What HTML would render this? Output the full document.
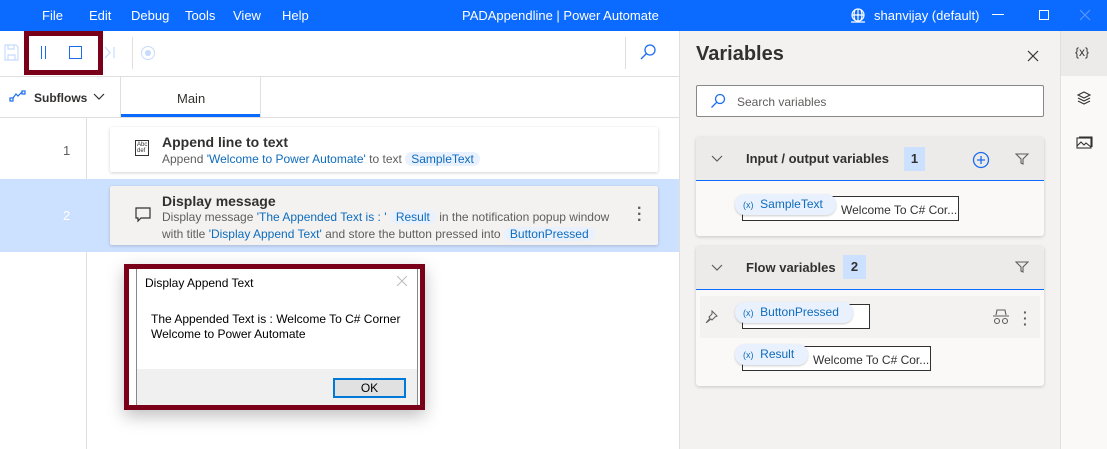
<!DOCTYPE html>
<html><head><meta charset="utf-8"><style>
*{box-sizing:border-box;margin:0;padding:0}
body{width:1107px;height:449px;overflow:hidden;position:relative;background:#fff;font-family:"Liberation Sans",sans-serif;color:#323130;font-size:13px}
.a{position:absolute}
.blue{color:#0f6cbd}
.chip{background:#e8f1fd;color:#0f6cbd;border-radius:10px;padding:0 6px}
.t{white-space:nowrap}
</style></head><body>
<!-- title bar -->
<div class="a" style="left:0;top:0;width:1107px;height:31px;background:#0b6aff;color:#fff;font-size:13px">
<span class="a t" style="left:42px;top:8px">File</span>
<span class="a t" style="left:89px;top:8px">Edit</span>
<span class="a t" style="left:131px;top:8px">Debug</span>
<span class="a t" style="left:185px;top:8px">Tools</span>
<span class="a t" style="left:233px;top:8px">View</span>
<span class="a t" style="left:282px;top:8px">Help</span>
<span class="a t" style="left:462px;top:8px">PADAppendline | Power Automate</span>
<svg class="a" style="left:850px;top:8px" width="16" height="16" viewBox="0 0 16 16" fill="none" stroke="#fff" stroke-width="1.2"><circle cx="8" cy="7" r="6"/><path d="M2 7h12M8 1v12M5 2q-2 5 0 10M11 2q2 5 0 10M1 14h14"/></svg>
<span class="a t" style="left:874px;top:8px">shanvijay (default)</span>
<div class="a" style="left:992px;top:14px;width:12px;height:1px;background:#fff"></div>
<div class="a" style="left:1039px;top:10px;width:10px;height:10px;border:1.3px solid #fff"></div>
<svg class="a" style="left:1079px;top:9px" width="12" height="12" viewBox="0 0 12 12" stroke="#5a96ff" stroke-width="1.2"><path d="M1 1l10 10M11 1L1 11"/></svg>
</div>
<!-- toolbar -->
<div class="a" style="left:0;top:76px;width:679px;height:1px;background:#e1dfdd"></div>
<svg class="a" style="left:4px;top:44px" width="15" height="17" viewBox="0 0 15 17" fill="none" stroke="#c7dbfd" stroke-width="1.2"><path d="M1 1h11l2 2v13H1z M4 16v-5h7v5 M4 1v4h6V1"/></svg>
<div class="a" style="left:24px;top:31px;width:79px;height:44px;border:5px solid #7a0019"></div>
<div class="a" style="left:41px;top:46px;width:1px;height:13px;background:#1a6cf0"></div>
<div class="a" style="left:45px;top:46px;width:1px;height:13px;background:#1a6cf0"></div>
<div class="a" style="left:69px;top:46px;width:13px;height:13px;border:1.3px solid #1a6cf0"></div>
<svg class="a" style="left:104px;top:46px" width="12" height="13" viewBox="0 0 12 13" fill="none" stroke="#c7dbfd" stroke-width="1.2"><path d="M1 1l5 5.5L1 12M10 1v11"/></svg>
<div class="a" style="left:132px;top:37px;width:1px;height:32px;background:#e1dfdd"></div>
<div class="a" style="left:141px;top:46px;width:14px;height:14px;border:1.3px solid #c7dbfd;border-radius:50%"></div>
<div class="a" style="left:145px;top:50px;width:6px;height:6px;background:#c7dbfd;border-radius:50%"></div>
<div class="a" style="left:625px;top:37px;width:1px;height:32px;background:#e1dfdd"></div>
<svg class="a" style="left:639px;top:43px" width="18" height="18" viewBox="0 0 18 18" fill="none" stroke="#1a6cf0" stroke-width="1.3"><circle cx="11" cy="7" r="5"/><path d="M7.5 10.5L2 16"/></svg>
<!-- tabs -->
<svg class="a" style="left:9px;top:89px" width="18" height="14" viewBox="0 0 18 14" fill="none" stroke="#1a6cf0" stroke-width="1.2"><rect x="1" y="9" width="3" height="3"/><rect x="13" y="2" width="3" height="3"/><path d="M4 9l3-4 2 2 4-4"/></svg>
<span class="a t" style="left:34px;top:91px;font-weight:bold;font-size:12px">Subflows</span>
<svg class="a" style="left:93px;top:93px" width="12" height="8" viewBox="0 0 12 8" fill="none" stroke="#323130" stroke-width="1.2"><path d="M1 1l5 5 5-5"/></svg>
<div class="a" style="left:120px;top:77px;width:1px;height:40px;background:#e1dfdd"></div>
<div class="a" style="left:260px;top:77px;width:1px;height:40px;background:#e1dfdd"></div>
<span class="a t" style="left:177px;top:91px;font-size:13px">Main</span>
<div class="a" style="left:121px;top:114px;width:139px;height:3px;background:#0b6aff"></div>
<div class="a" style="left:0;top:117px;width:679px;height:1px;background:#e1dfdd"></div>
<!-- rows -->
<div class="a" style="left:86px;top:118px;width:1px;height:331px;background:#e1dfdd"></div>
<div class="a" style="left:0;top:179px;width:679px;height:73px;background:#cce0ff"></div>
<span class="a" style="left:63px;top:143px;color:#605e5c">1</span>
<span class="a" style="left:63px;top:208px;color:#fff">2</span>
<div class="a" style="left:110px;top:127px;width:548px;height:45px;background:#fff;box-shadow:0 1px 3px rgba(0,0,0,.18);border-radius:2px"></div>
<div class="a" style="left:135px;top:140px;width:14px;height:16px;border:1px solid #323130;font-size:6px;line-height:6px;padding:1px">Abc<br>def</div>
<span class="a t" style="left:162px;top:134px;font-size:14px;font-weight:bold;color:#323130">Append line to text</span>
<span class="a t" style="left:162px;top:152px;font-size:12px;color:#605e5c">Append <span class="blue">'Welcome to Power Automate'</span> to text <span class="chip">SampleText</span></span>
<div class="a" style="left:110px;top:186px;width:548px;height:59px;background:#f3f2f1;box-shadow:0 1px 3px rgba(0,0,0,.18);border-radius:2px"></div>
<svg class="a" style="left:134px;top:207px" width="18" height="16" viewBox="0 0 18 16" fill="none" stroke="#323130" stroke-width="1.2"><path d="M2 1h14v10H7l-3 3v-3H2z"/></svg>
<span class="a t" style="left:162px;top:193px;font-size:14px;font-weight:bold">Display message</span>
<span class="a t" style="left:162px;top:210px;font-size:12px;color:#605e5c">Display message <span class="blue">'The Appended Text is :  '</span> <span class="chip">Result</span> in the notification popup window</span>
<span class="a t" style="left:162px;top:227px;font-size:12px;color:#605e5c">with title <span class="blue">'Display Append Text'</span> and store the button pressed into <span class="chip">ButtonPressed</span></span>
<span class="a" style="left:637px;top:206px;font-size:16px;font-weight:bold;line-height:6px;color:#605e5c">·<br>·<br>·</span>
<!-- dialog -->
<div class="a" style="left:124px;top:264px;width:301px;height:146px;border:5px solid #7a0019;box-shadow:0 6px 16px rgba(0,0,0,.25);background:#fff"></div>
<div class="a" style="left:129px;top:269px;width:8px;height:136px;background:#fff;border-right:1px solid #888"></div>
<div class="a" style="left:417px;top:269px;width:3px;height:136px;border-left:1px solid #888"></div>
<div class="a" style="left:137px;top:369px;width:280px;height:36px;background:#f0f0f0"></div>
<span class="a t" style="left:145px;top:276px;font-size:12px;color:#000">Display Append Text</span>
<svg class="a" style="left:397px;top:276px" width="10" height="10" viewBox="0 0 10 10" stroke="#bbb" stroke-width="1"><path d="M0 0l10 10M10 0L0 10"/></svg>
<span class="a t" style="left:151px;top:312px;font-size:12px;color:#000;line-height:15px">The Appended Text is :  Welcome To C# Corner<br>Welcome to Power Automate</span>
<div class="a" style="left:333px;top:378px;width:73px;height:20px;border:2px solid #0078d7;background:#e1e1e1;text-align:center;font-size:12px;line-height:16px;color:#000">OK</div>
<!-- right panel -->
<div class="a" style="left:679px;top:31px;width:381px;height:418px;background:#f3f2f1;border-left:1px solid #e1dfdd"></div>
<span class="a t" style="left:696px;top:43px;font-size:20px;font-weight:bold">Variables</span>
<svg class="a" style="left:1027px;top:50px" width="12" height="12" viewBox="0 0 12 12" stroke="#323130" stroke-width="1.2"><path d="M1 1l10 10M11 1L1 11"/></svg>
<div class="a" style="left:696px;top:85px;width:348px;height:32px;background:#fff;border:1px solid #8a8886;border-radius:2px"></div>
<svg class="a" style="left:710px;top:93px" width="16" height="16" viewBox="0 0 16 16" fill="none" stroke="#1a6cf0" stroke-width="1.3"><circle cx="10" cy="6" r="4.5"/><path d="M6.8 9.2L1.5 14.5"/></svg>
<span class="a t" style="left:737px;top:95px;font-size:12px;color:#605e5c">Search variables</span>
<!-- io section -->
<div class="a" style="left:696px;top:137px;width:348px;height:99px;background:#faf9f8;box-shadow:0 1px 3px rgba(0,0,0,.18);border-radius:3px"></div>
<div class="a" style="left:696px;top:137px;width:348px;height:44px;background:#edebe9;border-bottom:1.5px solid #0b6aff;border-radius:3px 3px 0 0"></div>
<svg class="a" style="left:711px;top:155px" width="12" height="8" viewBox="0 0 12 8" fill="none" stroke="#605e5c" stroke-width="1.2"><path d="M1 1l5 5 5-5"/></svg>
<span class="a t" style="left:746px;top:151px;font-size:13px;font-weight:bold">Input / output variables</span>
<div class="a" style="left:904px;top:147px;width:21px;height:24px;background:#cce0ff;text-align:center;line-height:24px;font-weight:bold">1</div>
<svg class="a" style="left:972px;top:151px" width="18" height="18" viewBox="0 0 18 18" fill="none" stroke="#1a6cf0" stroke-width="1.3"><circle cx="9" cy="9" r="7.5"/><path d="M9 5v8M5 9h8"/></svg>
<svg class="a" style="left:1015px;top:153px" width="14" height="12" viewBox="0 0 14 12" fill="none" stroke="#605e5c" stroke-width="1.1"><path d="M1 1h12L8 6v5l-2-1V6z"/></svg>
<div class="a" style="left:742px;top:196px;width:217px;height:25px;border:1px solid #323130;background:#fff"></div>
<span class="a t" style="left:841px;top:203px;font-size:12px">Welcome To C# Cor...</span>
<div class="a t" style="left:735px;top:194px;width:101px;height:21px;background:#e8f1fd;border-radius:10px;box-shadow:0 1px 2px rgba(0,0,0,.2);color:#0f6cbd;font-size:12px;line-height:21px;padding-left:8px"><span style="font-size:9px">(x)</span>&nbsp;&nbsp;SampleText</div>
<!-- flow section -->
<div class="a" style="left:696px;top:246px;width:348px;height:140px;background:#faf9f8;box-shadow:0 1px 3px rgba(0,0,0,.18);border-radius:3px"></div>
<div class="a" style="left:696px;top:246px;width:348px;height:44px;background:#edebe9;border-bottom:1.5px solid #0b6aff;border-radius:3px 3px 0 0"></div>
<svg class="a" style="left:711px;top:264px" width="12" height="8" viewBox="0 0 12 8" fill="none" stroke="#605e5c" stroke-width="1.2"><path d="M1 1l5 5 5-5"/></svg>
<span class="a t" style="left:746px;top:260px;font-size:13px;font-weight:bold">Flow variables</span>
<div class="a" style="left:843px;top:255px;width:23px;height:24px;background:#cce0ff;text-align:center;line-height:24px;font-weight:bold">2</div>
<svg class="a" style="left:1015px;top:261px" width="14" height="12" viewBox="0 0 14 12" fill="none" stroke="#605e5c" stroke-width="1.1"><path d="M1 1h12L8 6v5l-2-1V6z"/></svg>
<div class="a" style="left:700px;top:296px;width:340px;height:42px;background:#f3f2f1"></div>
<svg class="a" style="left:705px;top:310px" width="13" height="13" viewBox="0 0 13 13" fill="none" stroke="#605e5c" stroke-width="1"><path d="M7 1l5 5-2 1-3 3-1-1-5 4 4-5-1-1 3-3z"/></svg>
<div class="a" style="left:742px;top:304px;width:128px;height:25px;border:1px solid #323130;background:#fff"></div>
<div class="a t" style="left:735px;top:302px;width:118px;height:21px;background:#e8f1fd;border-radius:10px;box-shadow:0 1px 2px rgba(0,0,0,.2);color:#0f6cbd;font-size:12px;line-height:21px;padding-left:8px"><span style="font-size:9px">(x)</span>&nbsp;&nbsp;ButtonPressed</div>
<svg class="a" style="left:992px;top:309px" width="18" height="16" viewBox="0 0 18 16" fill="none" stroke="#605e5c" stroke-width="1.1"><path d="M4 6l1-5h8l1 5M1 7h16"/><circle cx="5" cy="12" r="2.5"/><circle cx="13" cy="12" r="2.5"/></svg>
<span class="a" style="left:1023px;top:309px;font-size:14px;font-weight:bold;line-height:6px;color:#605e5c">·<br>·<br>·</span>
<div class="a" style="left:742px;top:346px;width:189px;height:25px;border:1px solid #323130;background:#fff"></div>
<span class="a t" style="left:813px;top:353px;font-size:12px">Welcome To C# Cor...</span>
<div class="a t" style="left:735px;top:344px;width:73px;height:21px;background:#e8f1fd;border-radius:10px;box-shadow:0 1px 2px rgba(0,0,0,.2);color:#0f6cbd;font-size:12px;line-height:21px;padding-left:8px"><span style="font-size:9px">(x)</span>&nbsp;&nbsp;Result</div>
<!-- sidebar -->
<div class="a" style="left:1060px;top:31px;width:47px;height:418px;background:#faf9f8;border-left:1px solid #e1dfdd"></div>
<div class="a" style="left:1061px;top:31px;width:46px;height:45px;background:#edebe9"></div>
<span class="a" style="left:1075px;top:45px;font-size:12px">{x}</span>
<svg class="a" style="left:1076px;top:90px" width="16" height="16" viewBox="0 0 16 16" fill="none" stroke="#323130" stroke-width="1.1"><path d="M8 2l6 3-6 3-6-3z M2 8l6 3 6-3 M2 11l6 3 6-3"/></svg>
<svg class="a" style="left:1076px;top:136px" width="17" height="14" viewBox="0 0 17 14" fill="none" stroke="#323130" stroke-width="1.1"><rect x="1" y="2" width="14" height="10"/><path d="M1 10l4-4 3 3 2-2 5 4M3 1h13v10"/></svg>
</body></html>
